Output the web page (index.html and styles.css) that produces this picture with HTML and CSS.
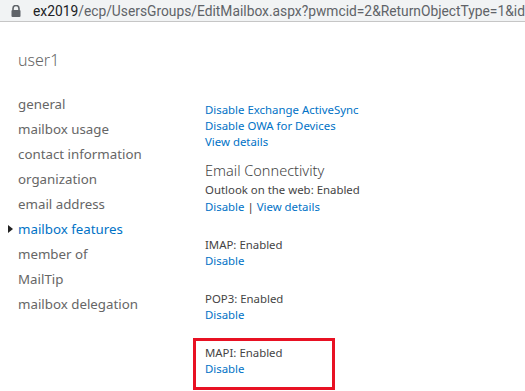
FILE: index.html
```html
<!DOCTYPE html>
<html>
<head>
<meta charset="utf-8">
<link rel="stylesheet" href="styles.css">
</head>
<body>
<div class="addr">
  <svg class="lock" width="10" height="12" viewBox="0 0 10 12"><path d="M2 5V3.5a3 3 0 0 1 6 0V5" fill="none" stroke="#5f6368" stroke-width="1.6"/><rect x="0.5" y="5" width="9" height="7" rx="1" fill="#5f6368"/></svg>
  <span class="url"><span class="host">ex2019</span>/ecp/UsersGroups/EditMailbox.aspx?pwmcid=2&amp;ReturnObjectType=1&amp;id</span>
</div>
<div class="page">
  <div class="title">user1</div>
  <div class="cols">
    <ul class="nav">
      <li>general</li>
      <li>mailbox usage</li>
      <li>contact information</li>
      <li>organization</li>
      <li>email address</li>
      <li class="active">mailbox features</li>
      <li>member of</li>
      <li>MailTip</li>
      <li>mailbox delegation</li>
    </ul>
    <div class="content">
      <div class="group">
        <a class="link">Disable Exchange ActiveSync</a>
        <a class="link">Disable OWA for Devices</a>
        <a class="link">View details</a>
      </div>
      <div class="section">Email Connectivity</div>
      <div class="group">
        <div class="text">Outlook on the web: Enabled</div>
        <div class="links"><a class="link inl">Disable</a> <span class="sep">|</span> <a class="link inl">View details</a></div>
      </div>
      <div class="group proto first">
        <div class="text">IMAP: Enabled</div>
        <a class="link">Disable</a>
      </div>
      <div class="group proto">
        <div class="text">POP3: Enabled</div>
        <a class="link">Disable</a>
      </div>
      <div class="group highlight">
        <div class="text">MAPI: Enabled</div>
        <a class="link">Disable</a>
      </div>
    </div>
  </div>
</div>
</body>
</html>
```

FILE: styles.css
```css
html, body {
  margin: 0;
  padding: 0;
  background: #fff;
  overflow: hidden;
}
body {
  font-family: "Noto Sans", "Open Sans", sans-serif;
  width: 525px;
  height: 391px;
}
.addr {
  height: 21px;
  background: #f1f3f4;
  border-bottom: 1px solid #c6c6c6;
  display: flex;
  align-items: center;
  white-space: nowrap;
  overflow: hidden;
}
.lock {
  margin-left: 11px;
  margin-right: 12px;
  flex: none;
}
.url {
  font-family: Roboto, "Noto Sans", sans-serif;
  font-size: 13.8px;
  color: #5f6368;
}
.host {
  color: #202124;
}
.page {
  padding-left: 18px;
}
.title {
  margin-top: 28px;
  font-size: 16px;
  font-weight: 300;
  color: #666;
  line-height: 20px;
}
.cols {
  display: flex;
  margin-top: 22px;
}
.nav {
  list-style: none;
  margin: 0;
  padding: 0;
  width: 187px;
  flex: none;
}
.nav li {
  font-size: 13.3px;
  line-height: 25px;
  color: #666;
  position: relative;
}
.nav li.active {
  color: #0072c6;
}
.nav li.active::before {
  content: "";
  position: absolute;
  left: -10px;
  top: 8px;
  border-left: 5px solid #222;
  border-top: 4px solid transparent;
  border-bottom: 4px solid transparent;
}
.content {
  padding-top: 10px;
  font-size: 11.4px;
  line-height: 16px;
}
.link {
  display: block;
  color: #0072c6;
}
.link.inl {
  display: inline;
}
.links {
  margin-top: 1px;
}
.sep {
  color: #333;
}
.text {
  color: #444;
}
.section {
  margin-top: 11px;
  margin-bottom: 3px;
  font-size: 14.5px;
  line-height: 18px;
  color: #444;
  font-weight: 300;
}
.group.proto {
  margin-top: 22px;
}
.group.proto.first {
  margin-top: 22px;
}
.highlight {
  margin-top: 15px;
  margin-left: -12px;
  width: 127px;
  padding: 4px 0 10px 9px;
  border: 3px solid #e81123;
}
```
